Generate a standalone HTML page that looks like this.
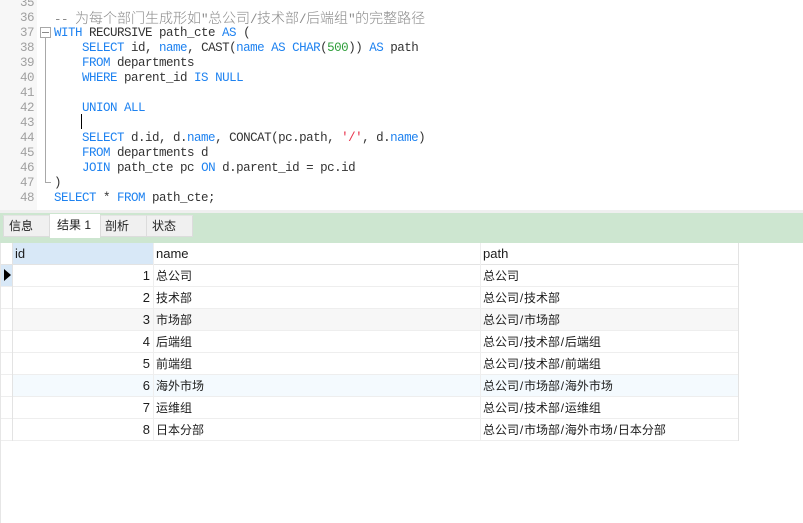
<!DOCTYPE html>
<html>
<head>
<meta charset="utf-8">
<style>
html,body{margin:0;padding:0;background:#fff;}
#p{position:relative;width:803px;height:523px;overflow:hidden;background:#fff;font-family:"Liberation Sans","Noto Sans CJK SC",sans-serif;}
.a{position:absolute;}
.ln{position:absolute;left:0;width:34px;text-align:right;font:12.5px/15px "Liberation Mono",monospace;letter-spacing:-.5px;color:#a0a0a0;white-space:pre;}
.c{position:absolute;left:54px;font:12.5px/15px "Liberation Mono","Noto Sans CJK SC",monospace;letter-spacing:-.5px;color:#333;white-space:pre;}
.k{color:#1e82f0;}
.s{color:#e8304a;}
.g{color:#8a8a8a;}
.z{letter-spacing:0;font-family:"Noto Sans CJK SC",sans-serif;font-size:14px;font-weight:300;}
.tab{position:absolute;top:215px;height:22px;background:#f0f0f0;border:1px solid #dcdcdc;border-top:1px solid #e4e4e4;box-sizing:border-box;font-size:12px;line-height:21px;color:#222;padding-left:5px;}
.h{position:absolute;background:#e3e3e3;}
.v{position:absolute;background:#eeeeee;}
.t{position:absolute;font-size:12px;line-height:22px;height:22px;color:#1c1c1c;white-space:pre;}
.t b{font-weight:normal;padding:0 .8px;}
.e{font-size:13px;}
.n{position:absolute;left:13px;width:137px;text-align:right;font-size:13px;line-height:22px;color:#1c1c1c;}
</style>
</head>
<body>
<div id="p">
<div class="a" style="left:0;top:0;width:37px;height:210px;background:#f7f7f7;"></div>
<div class="a" style="left:0;top:210px;width:803px;height:3px;background:#efefef;"></div>

<div class="ln" style="top:-4px">35</div>
<div class="ln" style="top:11px">36</div>
<div class="ln" style="top:26px">37</div>
<div class="ln" style="top:41px">38</div>
<div class="ln" style="top:56px">39</div>
<div class="ln" style="top:71px">40</div>
<div class="ln" style="top:86px">41</div>
<div class="ln" style="top:101px">42</div>
<div class="ln" style="top:116px">43</div>
<div class="ln" style="top:131px">44</div>
<div class="ln" style="top:146px">45</div>
<div class="ln" style="top:161px">46</div>
<div class="ln" style="top:176px">47</div>
<div class="ln" style="top:191px">48</div>

<div class="a" style="left:40px;top:27px;width:11px;height:11px;border:1px solid #a8a8a8;box-sizing:border-box;background:#fff;"></div>
<div class="a" style="left:42px;top:32px;width:7px;height:1px;background:#8a8a8a;"></div>
<div class="a" style="left:45px;top:38px;width:1px;height:144px;background:#a8a8a8;"></div>
<div class="a" style="left:45px;top:182px;width:6px;height:1px;background:#a8a8a8;"></div>

<div class="c g" style="top:11px">-- <span class="z">为每个部门生成形如</span>"<span class="z">总公司</span>/<span class="z">技术部</span>/<span class="z">后端组</span>"<span class="z">的完整路径</span></div>
<div class="c" style="top:26px"><span class="k">WITH</span> RECURSIVE path_cte <span class="k">AS</span> (</div>
<div class="c" style="top:41px">    <span class="k">SELECT</span> id, <span class="k">name</span>, CAST(<span class="k">name</span> <span class="k">AS</span> <span class="k">CHAR</span>(<span style="color:#2e9e3a">500</span>)) <span class="k">AS</span> path</div>
<div class="c" style="top:56px">    <span class="k">FROM</span> departments</div>
<div class="c" style="top:71px">    <span class="k">WHERE</span> parent_id <span class="k">IS</span> <span class="k">NULL</span></div>
<div class="c" style="top:101px">    <span class="k">UNION</span> <span class="k">ALL</span></div>
<div class="a" style="left:81px;top:114px;width:1px;height:15px;background:#000;"></div>
<div class="c" style="top:131px">    <span class="k">SELECT</span> d.id, d.<span class="k">name</span>, CONCAT(pc.path, <span class="s">'/'</span>, d.<span class="k">name</span>)</div>
<div class="c" style="top:146px">    <span class="k">FROM</span> departments d</div>
<div class="c" style="top:161px">    <span class="k">JOIN</span> path_cte pc <span class="k">ON</span> d.parent_id = pc.id</div>
<div class="c" style="top:176px">)</div>
<div class="c" style="top:191px"><span class="k">SELECT</span> * <span class="k">FROM</span> path_cte;</div>

<div class="a" style="left:0;top:213px;width:803px;height:30px;background:#cde6d0;"></div>
<div class="tab" style="left:3px;width:47px;">信息</div>
<div class="a" style="left:50px;top:214px;width:50px;height:24px;background:#fff;font-size:12px;line-height:22px;color:#222;padding-left:7px;box-sizing:border-box;">结果 1</div>
<div class="tab" style="left:100px;width:47px;padding-left:4px;">剖析</div>
<div class="tab" style="left:146px;width:47px;">状态</div>

<div class="a" style="left:0;top:243px;width:1px;height:280px;background:#e6e6e6;"></div>
<div class="a" style="left:13px;top:243px;width:140px;height:21px;background:#d8e8f7;"></div>
<div class="a" style="left:1px;top:265px;width:11px;height:21px;background:#d8e8f7;"></div>
<div class="a" style="left:13px;top:375px;width:725px;height:21px;background:#f4fafe;"></div>
<div class="a" style="left:13px;top:309px;width:725px;height:21px;background:#f7f7f7;"></div>

<div class="h" style="left:1px;top:264px;width:738px;height:1px;"></div>
<div class="v" style="left:1px;top:286px;width:738px;height:1px;"></div>
<div class="v" style="left:1px;top:308px;width:738px;height:1px;"></div>
<div class="v" style="left:1px;top:330px;width:738px;height:1px;"></div>
<div class="v" style="left:1px;top:352px;width:738px;height:1px;"></div>
<div class="v" style="left:1px;top:374px;width:738px;height:1px;"></div>
<div class="v" style="left:1px;top:396px;width:738px;height:1px;"></div>
<div class="v" style="left:1px;top:418px;width:738px;height:1px;"></div>
<div class="v" style="left:1px;top:440px;width:738px;height:1px;"></div>
<div class="h" style="left:12px;top:243px;width:1px;height:198px;"></div>
<div class="v" style="left:153px;top:243px;width:1px;height:198px;"></div>
<div class="v" style="left:480px;top:243px;width:1px;height:198px;"></div>
<div class="h" style="left:738px;top:243px;width:1px;height:198px;"></div>

<div class="a" style="left:4px;top:269px;width:0;height:0;border-left:7px solid #000;border-top:6px solid transparent;border-bottom:6px solid transparent;"></div>

<div class="t e" style="left:15px;top:243px;">id</div>
<div class="t e" style="left:156px;top:243px;">name</div>
<div class="t e" style="left:483px;top:243px;">path</div>

<div class="n" style="top:265px">1</div><div class="t" style="left:156px;top:265px">总公司</div><div class="t" style="left:483px;top:265px">总公司</div>
<div class="n" style="top:287px">2</div><div class="t" style="left:156px;top:287px">技术部</div><div class="t" style="left:483px;top:287px">总公司<b>/</b>技术部</div>
<div class="n" style="top:309px">3</div><div class="t" style="left:156px;top:309px">市场部</div><div class="t" style="left:483px;top:309px">总公司<b>/</b>市场部</div>
<div class="n" style="top:331px">4</div><div class="t" style="left:156px;top:331px">后端组</div><div class="t" style="left:483px;top:331px">总公司<b>/</b>技术部<b>/</b>后端组</div>
<div class="n" style="top:353px">5</div><div class="t" style="left:156px;top:353px">前端组</div><div class="t" style="left:483px;top:353px">总公司<b>/</b>技术部<b>/</b>前端组</div>
<div class="n" style="top:375px">6</div><div class="t" style="left:156px;top:375px">海外市场</div><div class="t" style="left:483px;top:375px">总公司<b>/</b>市场部<b>/</b>海外市场</div>
<div class="n" style="top:397px">7</div><div class="t" style="left:156px;top:397px">运维组</div><div class="t" style="left:483px;top:397px">总公司<b>/</b>技术部<b>/</b>运维组</div>
<div class="n" style="top:419px">8</div><div class="t" style="left:156px;top:419px">日本分部</div><div class="t" style="left:483px;top:419px">总公司<b>/</b>市场部<b>/</b>海外市场<b>/</b>日本分部</div>
</div>
</body>
</html>
